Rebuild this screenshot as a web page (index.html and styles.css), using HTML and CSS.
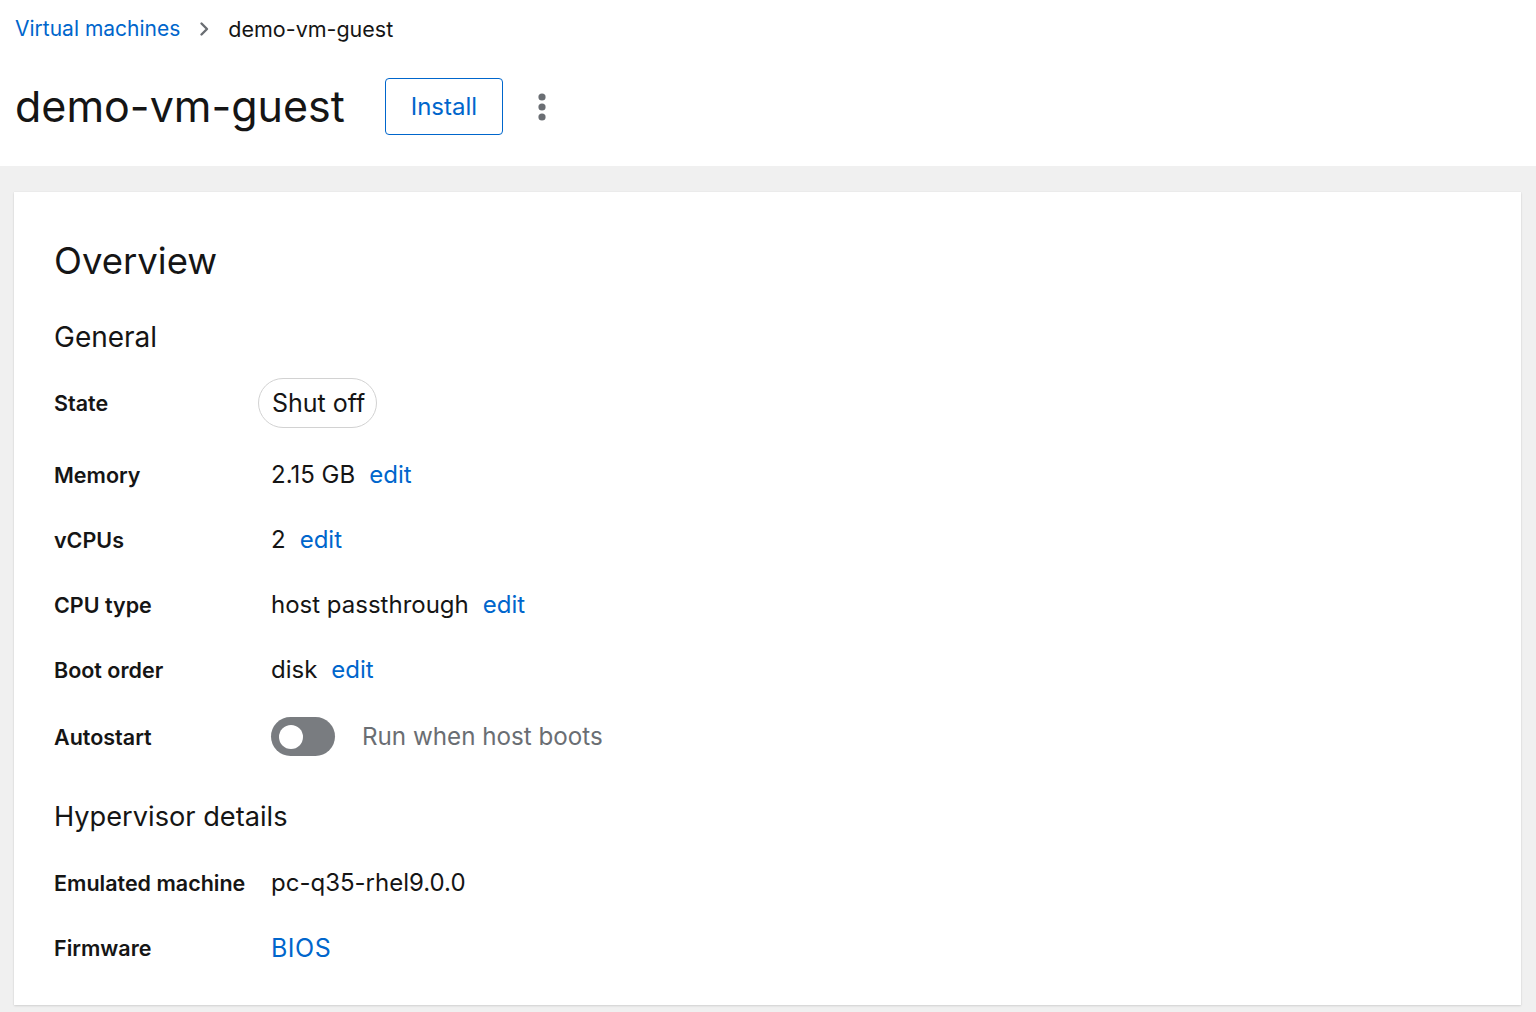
FILE: index.html
```html
<!DOCTYPE html>
<html lang="en">
<head>
<meta charset="utf-8">
<title>demo-vm-guest</title>
<link rel="stylesheet" href="styles.css">
</head>
<body>
<header class="page-header">
  <nav class="breadcrumb">
    <a class="crumb-link" href="#">Virtual machines</a>
    <svg class="crumb-sep" viewBox="0 0 10 16" width="10" height="16" aria-hidden="true"><path d="M2.5 2.5 L8 8 L2.5 13.5" fill="none" stroke="#6a6e73" stroke-width="2.4" stroke-linecap="round" stroke-linejoin="round"/></svg>
    <span class="crumb-current">demo-vm-guest</span>
  </nav>
  <div class="title-row">
    <h1 class="title">demo-vm-guest</h1>
    <button class="btn-secondary" type="button">Install</button>
    <button class="kebab" type="button" aria-label="Actions">
      <svg viewBox="0 0 8 28" width="8" height="28" aria-hidden="true"><circle cx="4" cy="4" r="3.6" fill="#6a6e73"/><circle cx="4" cy="14" r="3.6" fill="#6a6e73"/><circle cx="4" cy="24" r="3.6" fill="#6a6e73"/></svg>
    </button>
  </div>
</header>
<main class="page-main">
  <section class="card">
    <h2 class="card-title">Overview</h2>
    <h3 class="section-title">General</h3>
    <dl class="details">
      <dt>State</dt>
      <dd><span class="chip">Shut off</span></dd>
      <dt>Memory</dt>
      <dd>2.15 GB <a class="edit" href="#">edit</a></dd>
      <dt>vCPUs</dt>
      <dd>2 <a class="edit" href="#">edit</a></dd>
      <dt>CPU type</dt>
      <dd>host passthrough <a class="edit" href="#">edit</a></dd>
      <dt>Boot order</dt>
      <dd>disk <a class="edit" href="#">edit</a></dd>
      <dt class="toggle-label">Autostart</dt>
      <dd class="toggle-row"><span class="switch"><span class="knob"></span></span><span class="switch-text">Run when host boots</span></dd>
    </dl>
    <h3 class="section-title hyper">Hypervisor details</h3>
    <dl class="details">
      <dt>Emulated machine</dt>
      <dd>pc-q35-rhel9.0.0</dd>
      <dt>Firmware</dt>
      <dd><a class="link" href="#">BIOS</a></dd>
    </dl>
  </section>
</main>
</body>
</html>
```
FILE: styles.css
```css
* { box-sizing: border-box; }
html, body { margin: 0; padding: 0; }
body {
  font-family: Inter, "Liberation Sans", sans-serif;
  color: #151515;
  background: #f0f0f0;
}
a { text-decoration: none; color: #0066cc; }

.page-header {
  background: #fff;
  padding: 12px 16px 31px 15px;
}
.breadcrumb {
  display: flex;
  align-items: center;
  height: 34px;
  font-size: 21px;
  line-height: 34px;
}
.crumb-link { color: #0066cc; }
.crumb-sep { margin: 0 19px 0 19px; }
.crumb-current { color: #151515; font-size: 21.5px; }

.title-row {
  display: flex;
  align-items: center;
  margin-top: 32px;
  height: 57px;
}
.title {
  margin: 0 40px 0 0;
  font-size: 43px;
  font-weight: 400;
  line-height: 57px;
}
.btn-secondary {
  font-family: inherit;
  font-size: 24px;
  color: #0066cc;
  background: #fff;
  border: 1.5px solid #0066cc;
  border-radius: 4px;
  width: 118px;
  height: 57px;
  padding: 0;
}
.kebab {
  background: none;
  border: 0;
  padding: 0;
  margin-left: 35px;
  display: flex;
  align-items: center;
}

.page-main {
  padding: 26px 15px 7px 14px;
}
.card {
  background: #fff;
  box-shadow: 0 1px 2px rgba(0,0,0,0.12), 0 0 1px rgba(0,0,0,0.08);
  padding: 47px 40px 39px 40px;
}
.card-title {
  margin: 0;
  font-size: 36.5px;
  font-weight: 400;
  line-height: 44px;
}
.section-title {
  margin: 36px 0 23px 0;
  font-size: 28px;
  font-weight: 400;
  line-height: 36px;
}
.section-title.hyper { margin: 43px 0 30px 0; font-size: 27.2px; }

.details {
  display: grid;
  grid-template-columns: 217px 1fr;
  row-gap: 29px;
  margin: 0;
  align-items: center;
}
.details dt {
  font-size: 21.5px;
  font-weight: 600;
  line-height: 36px;
}
.details dd {
  margin: 0;
  font-size: 24px;
  line-height: 36px;
  display: flex;
  align-items: center;
}
.edit { margin-left: 14px; }
.chip {
  display: inline-flex;
  align-items: center;
  height: 50px;
  margin-left: -13px;
  padding: 0 11px 0 13px;
  border: 1.5px solid #d2d2d2;
  border-radius: 26px;
  font-size: 25px;
}
.toggle-row { height: 39px; }
.switch {
  width: 64px;
  height: 39px;
  border-radius: 20px;
  background: #797c80;
  display: flex;
  align-items: center;
  padding-left: 8px;
}
.knob {
  width: 24px;
  height: 24px;
  border-radius: 50%;
  background: #fff;
}
.switch-text {
  margin-left: 27px;
  color: #6a6e73;
  font-size: 24.2px;
}
.link { color: #0066cc; font-size: 25px; letter-spacing: 0.5px; }
```
